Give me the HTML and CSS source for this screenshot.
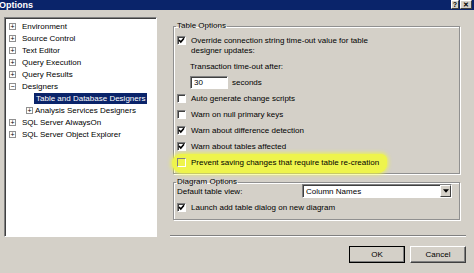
FILE: index.html
```html
<!DOCTYPE html>
<html lang="en">
<head>
  <meta charset="UTF-8">
  <title>Options</title>
  <link rel="stylesheet" href="styles.css">
</head>
<body>

  <div class="window">
    <!-- Title bar -->
    <div class="titlebar">
      <span class="title">Options</span>
      <div class="caption-btns">
        <span class="cap-btn">?</span>
        <span class="cap-btn close">&#x2715;</span>
      </div>
    </div>

    <div class="main">
      <!-- Tree -->
      <div class="tree">
        <div class="node"><span class="tog">+</span>Environment</div>
        <div class="node"><span class="tog">+</span>Source Control</div>
        <div class="node"><span class="tog">+</span>Text Editor</div>
        <div class="node"><span class="tog">+</span>Query Execution</div>
        <div class="node"><span class="tog">+</span>Query Results</div>
        <div class="node"><span class="tog">&minus;</span>Designers</div>
        <div class="node sub leaf"><span class="sel">Table and Database Designers</span></div>
        <div class="node sub"><span class="tog">+</span>Analysis Services Designers</div>
        <div class="node"><span class="tog">+</span>SQL Server AlwaysOn</div>
        <div class="node"><span class="tog">+</span>SQL Server Object Explorer</div>
      </div>

      <!-- Options -->
      <div class="right">
        <fieldset class="group table-opts">
          <legend>Table Options</legend>
          <div class="check">
            <span class="box on"><svg viewBox="0 0 7 7"><path d="M1 3 L2.8 5 L6 1.2"/></svg></span>
            <span>Override connection string time-out value for table<br>designer updates:</span>
          </div>
          <div class="timeout">
            <div>Transaction time-out after:</div>
            <div class="timeout-row">
              <span class="textbox">30</span>
              <span>seconds</span>
            </div>
          </div>
          <div class="check"><span class="box"></span><span>Auto generate change scripts</span></div>
          <div class="check"><span class="box"></span><span>Warn on null primary keys</span></div>
          <div class="check"><span class="box on"><svg viewBox="0 0 7 7"><path d="M1 3 L2.8 5 L6 1.2"/></svg></span><span>Warn about difference detection</span></div>
          <div class="check"><span class="box on"><svg viewBox="0 0 7 7"><path d="M1 3 L2.8 5 L6 1.2"/></svg></span><span>Warn about tables affected</span></div>
          <div class="check marked"><span class="box"></span><span>Prevent saving changes that require table re-creation</span></div>
        </fieldset>

        <fieldset class="group diagram-opts">
          <legend>Diagram Options</legend>
          <div class="view-row">
            <span>Default table view:</span>
            <div class="combo">
              <span>Column Names</span>
              <span class="drop"><svg viewBox="0 0 7 4"><path d="M0 0 H7 L3.5 4 Z"/></svg></span>
            </div>
          </div>
          <div class="check"><span class="box on"><svg viewBox="0 0 7 7"><path d="M1 3 L2.8 5 L6 1.2"/></svg></span><span>Launch add table dialog on new diagram</span></div>
        </fieldset>

        <div class="separator"></div>
      </div>
    </div>

    <div class="footer">
      <button class="default">OK</button>
      <button>Cancel</button>
    </div>
  </div>

</body>
</html>
```

FILE: styles.css
```css
body {
  margin: 0;
  font-family: "Liberation Sans", Arial, sans-serif;
  font-size: 8px;
  color: #000;
  background: #d4d0c8;
}

.window {
  width: 474px;
  height: 273px;
  overflow: hidden;
  background: #d4d0c8;
}

.titlebar {
  height: 10px;
  background: #0a246a;
  display: flex;
  justify-content: space-between;
  align-items: center;
}

.title {
  color: #fff;
  font-weight: bold;
  font-size: 9px;
  margin-left: -1px;
}

.caption-btns {
  display: flex;
  gap: 1px;
  margin-right: 2px;
  align-self: flex-start;
}

.cap-btn {
  width: 8px;
  height: 9px;
  box-sizing: border-box;
  background: #d4d0c8;
  border: 1px solid;
  border-color: #fff #404040 #404040 #fff;
  font-size: 7px;
  font-weight: bold;
  line-height: 7px;
  text-align: center;
}

.cap-btn.close {
  width: 12px;
}

.main {
  display: flex;
  padding: 7px 0 0 4px;
}

.tree {
  width: 153px;
  height: 220px;
  box-sizing: border-box;
  background: #fff;
  border: 1px solid;
  border-color: #808080 #fff #fff #808080;
  box-shadow: inset 1px 1px 0 #404040;
  padding-top: 2px;
}

.node {
  height: 12px;
  display: flex;
  align-items: center;
  padding-left: 4px;
  white-space: nowrap;
}

.node.sub {
  padding-left: 21px;
}

.node.sub .tog {
  margin-right: 2px;
}

.node.leaf {
  padding-left: 29px;
}

.tog {
  width: 7px;
  height: 7px;
  box-sizing: border-box;
  border: 1px solid #909090;
  margin-right: 6px;
  font-size: 7px;
  line-height: 5px;
  text-align: center;
}

.sel {
  background: #0a246a;
  color: #fff;
  padding: 1px 2px;
}

.right {
  width: 296px;
  height: 220px;
  margin-left: 13px;
  display: flex;
  flex-direction: column;
}

.group {
  margin: 0 0 0 3px;
  width: 287px;
  box-sizing: border-box;
  border: 1px solid #909090;
  box-shadow: 1px 1px 0 #fff, inset 1px 1px 0 #fff;
  padding: 0 0 0 3px;
}

.group legend {
  padding: 0 1px;
  margin-left: -1px;
  line-height: 10px;
}

.table-opts {
  margin-top: 4px;
  height: 153px;
  padding-top: 5px;
}

.check {
  display: flex;
  align-items: flex-start;
  line-height: 10px;
  margin-bottom: 6px;
}

.box {
  width: 9px;
  height: 9px;
  flex: none;
  box-sizing: border-box;
  background: #fff;
  border: 1px solid;
  border-color: #808080 #fff #fff #808080;
  box-shadow: inset 1px 1px 0 #404040;
  margin-right: 5px;
  display: flex;
}

.box svg {
  width: 7px;
  height: 7px;
  fill: none;
  stroke: #000;
  stroke-width: 1.6;
}

.timeout {
  margin: 1px 0 5px 13px;
  line-height: 10px;
}

.timeout-row {
  display: flex;
  align-items: center;
  gap: 4px;
  margin-top: 4px;
}

.textbox {
  width: 38px;
  height: 13px;
  box-sizing: border-box;
  background: #fff;
  border: 1px solid;
  border-color: #808080 #fff #fff #808080;
  box-shadow: inset 1px 1px 0 #404040;
  padding: 1px 3px;
  line-height: 10px;
}

.check.marked {
  background: #eef44c;
  border-radius: 9px 6px 9px 10px;
  margin: -4px 72px 0 -5px;
  padding: 4px 0 5px 5px;
  box-shadow: 0 0 4px 1px #eef44c;
}

.check.marked .box {
  background: transparent;
  box-shadow: none;
}

.diagram-opts {
  margin-top: 3px;
  height: 43px;
}

.view-row {
  display: flex;
  align-items: center;
  justify-content: space-between;
  margin: -3px 7px 5px 0;
}

.combo {
  width: 150px;
  height: 14px;
  box-sizing: border-box;
  background: #fff;
  border: 1px solid;
  border-color: #808080 #fff #fff #808080;
  box-shadow: inset 1px 1px 0 #404040;
  display: flex;
  align-items: center;
  justify-content: space-between;
  padding-left: 3px;
}

.drop {
  width: 11px;
  height: 12px;
  box-sizing: border-box;
  background: #d4d0c8;
  border: 1px solid;
  border-color: #fff #404040 #404040 #fff;
  display: flex;
  align-items: center;
  justify-content: center;
}

.drop svg {
  width: 6px;
  height: 4px;
  fill: #000;
}

.separator {
  margin-top: auto;
  border-top: 1px solid #808080;
  border-bottom: 1px solid #fff;
  margin-bottom: 0;
}

.footer {
  display: flex;
  justify-content: flex-end;
  gap: 5px;
  padding: 9px 8px 0 0;
}

button {
  width: 56px;
  height: 17px;
  font-family: "Liberation Sans", Arial, sans-serif;
  font-size: 8px;
  background: #d4d0c8;
  border: 1px solid;
  border-color: #fff #404040 #404040 #fff;
  box-shadow: inset -1px -1px 0 #808080;
  padding: 0;
}

button.default {
  outline: 1px solid #000;
  outline-offset: -1px;
}
```
